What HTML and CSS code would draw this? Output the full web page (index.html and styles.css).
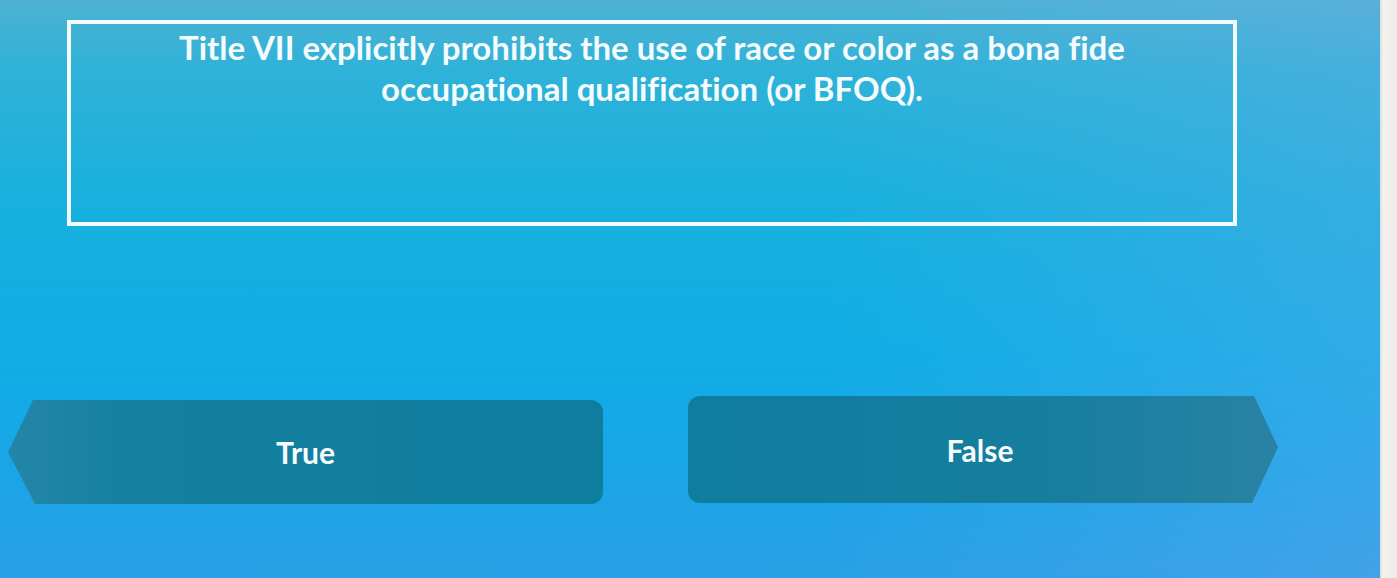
FILE: index.html
```html
<!DOCTYPE html>
<html lang="en">
<head>
  <meta charset="UTF-8">
  <meta name="viewport" content="width=device-width, initial-scale=1.0">
  <title>Quiz - Question</title>
  <link rel="stylesheet" href="styles.css">
</head>
<body>

<div class="screen">
  <main class="stage">
    <div class="question">
      <p>Title VII explicitly prohibits the use of race or color as a bona fide occupational qualification (or BFOQ).</p>
    </div>

    <div class="answers">
      <button class="answer answer-left">True</button>
      <button class="answer answer-right">False</button>
    </div>
  </main>
  <div class="bezel"></div>
</div>

</body>
</html>
```

FILE: styles.css
```css
body {
  margin: 0;
  padding: 0;
  font-family: Lato, "Open Sans", sans-serif;
  font-variant-ligatures: none;
  background-color: #ecebe7;
  overflow: hidden;
}
.screen {
  display: flex;
  height: 578px;
}
.stage {
  flex: 1;
  display: flex;
  flex-direction: column;
  padding: 20px 0 0 0;
  background:
    linear-gradient(90deg, rgba(255,255,255,0) 60%, rgba(120,170,235,0.3) 100%),
    linear-gradient(180deg, #4db2d2 0%, #2fb2d8 12%, #18b0dd 35%, #10ade6 62%, #1aa5e8 82%, #2a9fe6 100%);
}
.bezel {
  width: 17px;
  background: linear-gradient(90deg, #d9dbd9 0, #f3f2ef 3px, #ecebe8 100%);
}
.question {
  margin-left: 67px;
  width: 1162px;
  height: 198px;
  border: 4px solid #f2fbfd;
}
.question p {
  margin: 0;
  padding: 3px 60px 0;
  text-align: center;
  color: #f4fbfd;
  font-size: 33px;
  font-weight: 700;
  line-height: 41px;
}
.answers {
  display: flex;
  gap: 85px;
  margin-top: 170px;
  padding-left: 8px;
}
.answer {
  height: 105px;
  border: none;
  color: #f6fbfc;
  font-family: inherit;
  font-size: 30px;
  font-weight: 700;
  cursor: pointer;
}
.answer-left {
  width: 595px;
  height: 104px;
  margin-top: 4px;
  border-radius: 0 12px 12px 0;
  background: linear-gradient(90deg, #2486a8 0%, #15809f 20%, #0e7d9e 100%);
  clip-path: polygon(25px 0, 100% 0, 100% 100%, 27px 100%, 0 50%);
}
.answer-right {
  width: 590px;
  height: 107px;
  padding-right: 12px;
  border-radius: 12px 0 0 12px;
  background: linear-gradient(90deg, #0f7d9e 0%, #167e9f 60%, #2a82a3 100%);
  clip-path: polygon(0 0, calc(100% - 24px) 0, 100% 48%, calc(100% - 26px) 100%, 0 100%);
}
```
